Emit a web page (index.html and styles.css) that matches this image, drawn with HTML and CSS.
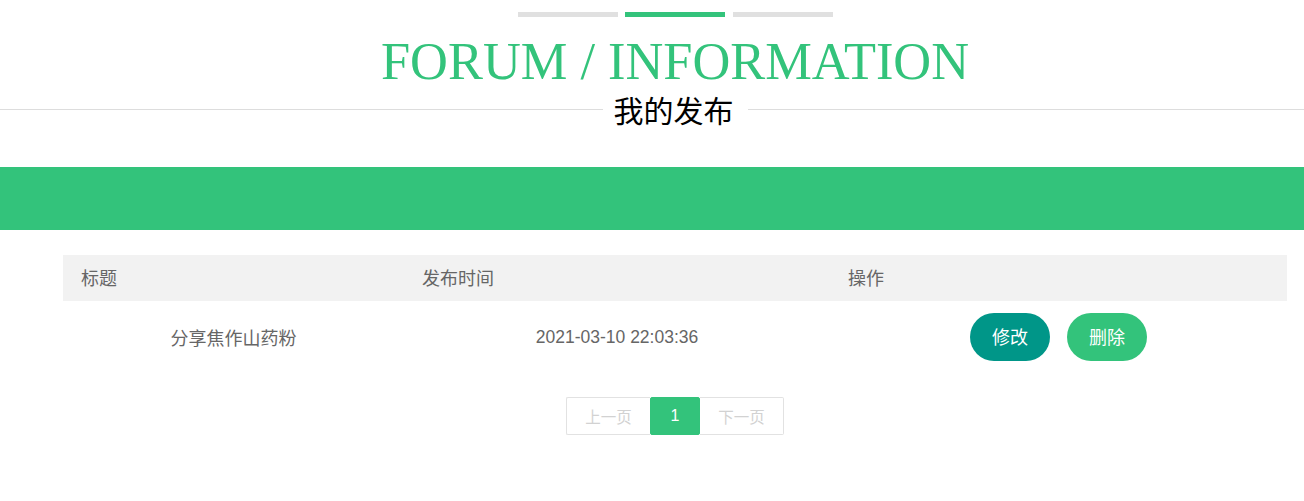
FILE: index.html
```html
<!DOCTYPE html>
<html lang="zh-CN">
<head>
<meta charset="utf-8">
<title>我的发布</title>
<link rel="stylesheet" href="styles.css">
</head>
<body>
<header class="head">
  <div class="head-inner">
    <div class="bars">
      <span class="bar"></span>
      <span class="bar bar-on"></span>
      <span class="bar"></span>
    </div>
    <h1 class="title">FORUM / INFORMATION</h1>
  </div>
  <div class="sub"><span class="sub-text">我的发布</span></div>
</header>
<div class="banner"></div>
<main class="main">
  <table class="list">
    <colgroup>
      <col class="c1"><col class="c2"><col class="c3">
    </colgroup>
    <thead>
      <tr><th>标题</th><th>发布时间</th><th>操作</th></tr>
    </thead>
    <tbody>
      <tr>
        <td>分享焦作山药粉</td>
        <td class="date">2021-03-10 22:03:36</td>
        <td><div class="ops"><button class="btn btn-edit">修改</button><button class="btn btn-del">删除</button></div></td>
      </tr>
    </tbody>
  </table>
  <nav class="pager">
    <a class="pg pg-dis">上一页</a><span class="pg pg-cur">1</span><a class="pg pg-dis">下一页</a>
  </nav>
</main>
</body>
</html>
```
FILE: styles.css
```css
html, body {
  margin: 0;
  padding: 0;
  background: #fff;
}
body {
  font-family: "Liberation Sans", "Noto Sans CJK SC", sans-serif;
  color: #666;
}
.head {
  padding-top: 12px;
}
.head-inner {
  padding-left: 46px;
  display: flex;
  flex-direction: column;
  align-items: center;
}
.bars {
  display: flex;
  gap: 7.5px;
}
.bar {
  display: block;
  width: 100px;
  height: 5px;
  background: #e0e0e0;
}
.bar-on {
  background: #33c37b;
}
.title {
  margin: 14px 0 0;
  font-family: "Liberation Serif", serif;
  font-weight: normal;
  font-size: 52.4px;
  line-height: 60px;
  color: #33c37b;
  white-space: nowrap;
}
.sub {
  margin-top: 3px;
  display: flex;
  align-items: center;
}
.sub::before, .sub::after {
  content: "";
  height: 1px;
  background: #ddd;
}
.sub::before {
  flex: 1 1 46px;
}
.sub::after {
  flex: 1 1 0;
}
.sub-text {
  padding: 0 14px 0 11px;
  font-family: "Noto Sans CJK SC", sans-serif;
  font-size: 30px;
  line-height: 30px;
  color: #000;
}
.banner {
  margin-top: 43px;
  height: 63px;
  background: #33c37b;
}
.main {
  padding: 25px 17px 0 63px;
}
.list {
  width: 100%;
  border-collapse: collapse;
  table-layout: fixed;
  font-size: 18px;
}
.c1 { width: 341px; }
.c2 { width: 426px; }
.c3 { width: auto; }
.list th {
  height: 44px;
  padding: 0 0 2px 18px;
  background: #f2f2f2;
  text-align: left;
  font-weight: normal;
  color: #666;
}
.list td {
  height: 72px;
  padding: 0;
  text-align: center;
  color: #666;
}
.date {
  font-size: 17.5px;
}
.ops {
  display: flex;
  justify-content: center;
  gap: 17px;
}
.btn {
  width: 80px;
  height: 48px;
  border: 0;
  border-radius: 24px;
  color: #fff;
  font-family: "Noto Sans CJK SC", sans-serif;
  font-size: 18px;
  padding: 0 0 2px;
  cursor: pointer;
}
.btn-edit { background: #009688; }
.btn-del { background: #33c37b; }
.pager {
  margin-top: 24px;
  display: flex;
  justify-content: center;
}
.pg {
  display: block;
  height: 36px;
  line-height: 36px;
  border: 1px solid #e2e2e2;
  font-size: 15.5px;
  font-family: "Noto Sans CJK SC", sans-serif;
}
.pg-dis {
  width: 83px;
  text-align: center;
  color: #d2d2d2;
}
.pg-dis:first-child { border-right: 0; border-radius: 2px 0 0 2px; }
.pg-dis:last-child { border-left: 0; border-radius: 0 2px 2px 0; }
.pg-cur {
  width: 48px;
  text-align: center;
  color: #fff;
  background: #33c37b;
  border-color: #33c37b;
  border-radius: 2px;
  font-family: "Liberation Sans", sans-serif;
  font-size: 16px;
}
```
